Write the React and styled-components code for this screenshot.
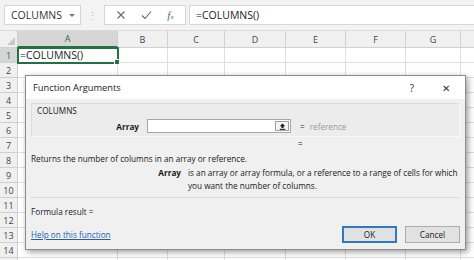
import styled, { createGlobalStyle } from 'styled-components';

const GlobalStyle = createGlobalStyle`
  html, body { margin: 0; padding: 0; background: #fff; overflow: hidden; }
  body { font-family: "Open Sans", "Noto Sans", sans-serif; color: #222; }
`

const Page = styled.div`
  position: relative;
  width: 474px;
  height: 260px;
  overflow: hidden;
  background: #fff;
`

const Toolbar = styled.div`
  display: flex;
  align-items: center;
  height: 31px;
  padding-left: 4px;
  background: #f3f3f3;
  border-bottom: 1px solid #dadada;
  box-sizing: border-box;
`

const Box = styled.div`
  height: 20px;
  box-sizing: border-box;
  background: #fff;
  border: 1px solid #d6d6d6;
  display: flex;
  align-items: center;
`

const NameBox = styled(Box)`
  width: 77px;
  padding: 0 5px 0 6px;
  justify-content: space-between;
  font-size: 10.5px;
  color: #333;
`

const Caret = styled.span`
  width: 0;
  height: 0;
  border-left: 3px solid transparent;
  border-right: 3px solid transparent;
  border-top: 3px solid #777;
`

const Grip = styled.div`
  width: 23px;
  display: flex;
  justify-content: center;
  color: #bdbdbd;
  font-size: 11px;
`

const IconBox = styled(Box)`
  width: 82px;
  justify-content: space-around;
  padding: 0 4px;
`

const Fx = styled.span`
  font-family: "Liberation Serif", serif;
  font-style: italic;
  font-size: 11px;
  color: #3b7a4b;
  small { font-size: 7px; }
`

const FormulaBox = styled(Box)`
  flex: 1;
  margin-left: 3px;
  padding-left: 6px;
  font-size: 10.5px;
  color: #222;
  border-right: none;
`

const Sheet = styled.div`
  display: grid;
  grid-template-columns: 18px 100px 50px 57px 61px 60px 60px 55px 20px;
  grid-template-rows: 17px repeat(15, 15px);
`

const Head = styled.div`
  background: ${p => (p.$active ? '#d6d6d6' : '#f0f0f0')};
  color: ${p => (p.$active ? '#217346' : '#444')};
  border-right: 1px solid #d0d0d0;
  border-bottom: ${p => (p.$active && p.$col ? '2px solid #217346' : '1px solid #d0d0d0')};
  box-sizing: border-box;
  display: flex;
  align-items: center;
  justify-content: center;
  font-size: 9px;
`

const Corner = styled(Head)`
  position: relative;
  &::after {
    content: '';
    position: absolute;
    right: 2px;
    bottom: 2px;
    border-left: 8px solid transparent;
    border-bottom: 8px solid #c8c8c8;
  }
`

const Cell = styled.div`
  position: relative;
  border-right: 1px solid #dedede;
  border-bottom: 1px solid #dedede;
  box-sizing: border-box;
  font-size: 10.5px;
  line-height: 14px;
  padding-left: 2px;
  white-space: nowrap;
  ${p => p.$selected && `
    outline: 2px solid #217346;
    outline-offset: -1px;
    z-index: 1;
    &::after {
      content: '';
      position: absolute;
      right: -3px;
      bottom: -3px;
      width: 4px;
      height: 4px;
      background: #217346;
      border: 1px solid #fff;
    }
  `}
`

const Dialog = styled.div`
  position: absolute;
  left: 25px;
  top: 75px;
  width: 441px;
  height: 175px;
  box-sizing: border-box;
  border: 1px solid #8c8c8c;
  background: #f0f0f0;
  box-shadow: 2px 2px 6px rgba(0, 0, 0, 0.4);
  display: flex;
  flex-direction: column;
  font-size: 8.2px;
  color: #1a1a1a;
`

const TitleBar = styled.div`
  height: 23px;
  flex: none;
  background: #fff;
  display: flex;
  align-items: center;
  padding: 0 2px 0 7px;
  font-size: 9.3px;
`

const Title = styled.span`
  flex: 1;
`

const TitleBtn = styled.span`
  width: 34px;
  text-align: center;
  color: #333;
  font-size: 10px;
`

const Body = styled.div`
  flex: 1;
  padding: 4px 5px 6px 5px;
  display: flex;
  flex-direction: column;
`

const Group = styled.div`
  height: 34px;
  box-sizing: border-box;
  border: 1px solid #fafafa;
  border-top-color: #dcdcdc;
  border-left-color: #dcdcdc;
  background: #ececec;
  padding: 1px 0 0 5px;
`

const GroupLabel = styled.div`
  font-size: 8.2px;
  line-height: 11px;
  color: #222;
`

const ArgRow = styled.div`
  display: flex;
  align-items: center;
  height: 14px;
  margin-top: 3px;
`

const ArgName = styled.b`
  width: 102px;
  text-align: right;
  margin-right: 8px;
  font-weight: 700;
`

const Input = styled.div`
  width: 144px;
  height: 14px;
  box-sizing: border-box;
  background: #fff;
  border: 1px solid #a8a8a8;
  display: flex;
  justify-content: flex-end;
  align-items: center;
  padding-right: 1px;
`

const PickBtn = styled.span`
  width: 14px;
  height: 10px;
  box-sizing: border-box;
  border: 1px solid #a0a0a0;
  background: #f4f4f4;
  display: flex;
  align-items: center;
  justify-content: center;
`

const Equals = styled.span`
  margin-left: ${p => p.$left || 0}px;
  color: #333;
`

const Hint = styled.span`
  margin-left: 5px;
  color: #9a9a9a;
`

const ResultRow = styled.div`
  height: 14px;
  line-height: 14px;
  padding-left: 267px;
`

const Text = styled.div`
  line-height: 13px;
  margin-top: ${p => p.$mt || 0}px;
`

const ArgHelp = styled.div`
  display: grid;
  grid-template-columns: 157px 1fr;
  line-height: 13px;
  margin-top: 1px;
  b { text-align: right; padding-right: 7px; font-weight: 700; }
`

const Rule = styled.div`
  height: 1px;
  background: #dcdcdc;
  margin: 5px 0 0 0;
`

const Footer = styled.div`
  display: flex;
  align-items: center;
  margin-top: auto;
`

const Link = styled.a`
  flex: 1;
  color: #1f5fae;
  text-decoration: underline;
  font-size: 8.2px;
`

const Button = styled.button`
  width: 55px;
  height: 17px;
  margin-left: 8px;
  box-sizing: border-box;
  background: #e1e1e1;
  border: ${p => (p.$primary ? '2px solid #2f78c4' : '1px solid #adadad')};
  font-family: inherit;
  font-size: 8.2px;
  color: #1a1a1a;
  padding: 0;
`

const cols = ['A', 'B', 'C', 'D', 'E', 'F', 'G', '']

const App = () => {
  const rows = Array.from({ length: 15 }, (_, i) => i + 1)
  return (
    <Page>
      <GlobalStyle />
      <Toolbar>
        <NameBox>COLUMNS<Caret /></NameBox>
        <Grip>⋮</Grip>
        <IconBox>
          <svg width="10" height="10" viewBox="0 0 10 10">
            <path d="M1.5 1.5l7 7M8.5 1.5l-7 7" stroke="#666" strokeWidth="1.1" />
          </svg>
          <svg width="11" height="10" viewBox="0 0 11 10">
            <path d="M1 5.5l3 3 6-7" stroke="#666" strokeWidth="1.1" fill="none" />
          </svg>
          <Fx>f<small>x</small></Fx>
        </IconBox>
        <FormulaBox>=COLUMNS()</FormulaBox>
      </Toolbar>

      <Sheet>
        <Corner />
        {cols.map((c, i) => (
          <Head key={i} $col $active={c === 'A'}>{c}</Head>
        ))}
        {rows.map(r => (
          <Row key={r} r={r} />
        ))}
      </Sheet>

      <Dialog>
        <TitleBar>
          <Title>Function Arguments</Title>
          <TitleBtn>?</TitleBtn>
          <TitleBtn>✕</TitleBtn>
        </TitleBar>
        <Body>
          <Group>
            <GroupLabel>COLUMNS</GroupLabel>
            <ArgRow>
              <ArgName>Array</ArgName>
              <Input>
                <PickBtn>
                  <svg width="7" height="7" viewBox="0 0 7 7">
                    <path d="M3.5 0.5L0.8 3.3h1.7V5h2V3.3h1.7z" fill="#111" />
                    <path d="M0.8 6.3h5.4" stroke="#111" strokeWidth="1" />
                  </svg>
                </PickBtn>
              </Input>
              <Equals $left={9}>=</Equals>
              <Hint>reference</Hint>
            </ArgRow>
          </Group>
          <ResultRow>=</ResultRow>
          <Text $mt={1}>Returns the number of columns in an array or reference.</Text>
          <ArgHelp>
            <b>Array</b>
            <span>is an array or array formula, or a reference to a range of cells for which you want the number of columns.</span>
          </ArgHelp>
          <Rule />
          <Text $mt={7}>Formula result =</Text>
          <Footer>
            <Link>Help on this function</Link>
            <Button $primary>OK</Button>
            <Button>Cancel</Button>
          </Footer>
        </Body>
      </Dialog>
    </Page>
  )
}

const Row = ({ r }) => (
  <>
    <Head $active={r === 1}>{r < 15 ? r : ''}</Head>
    {cols.map((c, i) => (
      <Cell key={i} $selected={r === 1 && c === 'A'}>
        {r === 1 && c === 'A' ? '=COLUMNS()' : ''}
      </Cell>
    ))}
  </>
)

export default App
